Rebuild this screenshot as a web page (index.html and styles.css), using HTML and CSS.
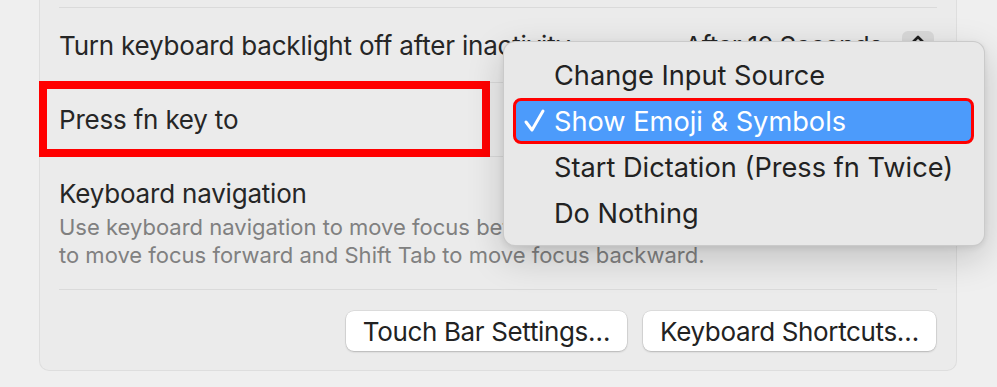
FILE: index.html
```html
<!DOCTYPE html>
<html>
<head>
<meta charset="utf-8">
<link rel="stylesheet" href="styles.css">
</head>
<body>
<div class="panel">
  <div class="row row-first">
    <span class="label">Turn keyboard backlight off after inactivity</span>
    <span class="popup">
      <span class="popup-value">After 10 Seconds</span>
      <span class="stepper">
        <svg width="32" height="28" viewBox="0 0 32 28"><path d="M11 11 L16 6 L21 11" fill="none" stroke="#1e1e1e" stroke-width="2.6" stroke-linecap="round" stroke-linejoin="round"/><path d="M11 17 L16 22 L21 17" fill="none" stroke="#1e1e1e" stroke-width="2.6" stroke-linecap="round" stroke-linejoin="round"/></svg>
      </span>
    </span>
  </div>
  <div class="row row-second">
    <span class="label">Press fn key to</span>
  </div>
  <div class="row-nav">
    <div class="label">Keyboard navigation</div>
    <div class="sub">Use keyboard navigation to move focus between controls. Press the Tab key<br>to move focus forward and Shift Tab to move focus backward.</div>
  </div>
  <div class="footer">
    <button class="btn">Touch Bar Settings…</button>
    <button class="btn">Keyboard Shortcuts…</button>
  </div>
</div>

<div class="redbox"></div>

<div class="menu">
  <div class="item">Change Input Source</div>
  <div class="item selected">
    <svg class="check" width="40" height="40" viewBox="0 0 40 40"><path d="M10 21 L16 29 L27 10" fill="none" stroke="#fff" stroke-width="3" stroke-linecap="round" stroke-linejoin="round"/></svg>
    Show Emoji &amp; Symbols
  </div>
  <div class="item">Start Dictation (Press fn Twice)</div>
  <div class="item">Do Nothing</div>
</div>
</body>
</html>
```

FILE: styles.css
```css
* { box-sizing: border-box; }

html, body {
  margin: 0;
  padding: 0;
}

body {
  background: #efefef;
  font-family: Inter, "Noto Sans", sans-serif;
  color: #262626;
  width: 997px;
  height: 387px;
  overflow: hidden;
  position: relative;
}

.panel {
  margin-left: 39px;
  width: 918px;
  height: 371px;
  background: #ebebeb;
  border: 1px solid #dedede;
  border-top: none;
  border-radius: 0 0 10px 10px;
  padding: 7px 19px 0;
}

.label {
  font-size: 26px;
  letter-spacing: -0.2px;
}

.row {
  display: flex;
  align-items: center;
  justify-content: space-between;
  border-top: 1px solid #dadada;
}

.row-first {
  height: 75px;
}

.row-second {
  height: 74px;
}

.popup {
  display: flex;
  align-items: center;
  gap: 20px;
}

.popup-value {
  font-size: 26px;
  letter-spacing: -0.7px;
}

.stepper {
  display: flex;
  width: 32px;
  height: 28px;
  border-radius: 6px;
  background: #d9d9d9;
  margin-right: 3px;
}

.row-nav {
  border-top: 1px solid #dadada;
  height: 133px;
  padding-top: 20px;
}

.row-nav .label {
  line-height: 34px;
}

.sub {
  font-size: 22px;
  line-height: 28px;
  color: #808080;
  letter-spacing: 0;
  margin-top: 2px;
}

.footer {
  border-top: 1px solid #dadada;
  display: flex;
  justify-content: flex-end;
  gap: 16px;
  padding-top: 21px;
  padding-right: 1px;
}

.btn {
  height: 40px;
  padding: 0 17px;
  font-family: Inter, "Noto Sans", sans-serif;
  font-size: 26px;
  letter-spacing: -0.35px;
  color: #222;
  background: #ffffff;
  border: none;
  border-radius: 8px;
  box-shadow: 0 0 0 0.5px rgba(0, 0, 0, 0.12), 0 1px 2px rgba(0, 0, 0, 0.18);
}

.redbox {
  position: absolute;
  left: 39px;
  top: 81px;
  width: 451px;
  height: 76px;
  border: 8px solid #ff0000;
}

.menu {
  position: absolute;
  left: 503px;
  top: 41px;
  width: 482px;
  height: 205px;
  background: #e8e8e8;
  border: 1px solid rgba(0, 0, 0, 0.13);
  border-radius: 12px;
  padding: 10px 10px 9px 9px;
  box-shadow: 0 12px 36px rgba(0, 0, 0, 0.18), 0 2px 6px rgba(0, 0, 0, 0.08);
}

.item {
  position: relative;
  height: 46px;
  display: flex;
  align-items: center;
  padding-left: 41px;
  font-size: 27.2px;
  letter-spacing: 0;
  color: #222;
}

.item.selected {
  background: #4c9bfb;
  color: #ffffff;
  border: 3px solid #ff0000;
  border-radius: 8px;
  padding-left: 38px;
}

.check {
  position: absolute;
  left: 0;
  top: 0;
}
```
